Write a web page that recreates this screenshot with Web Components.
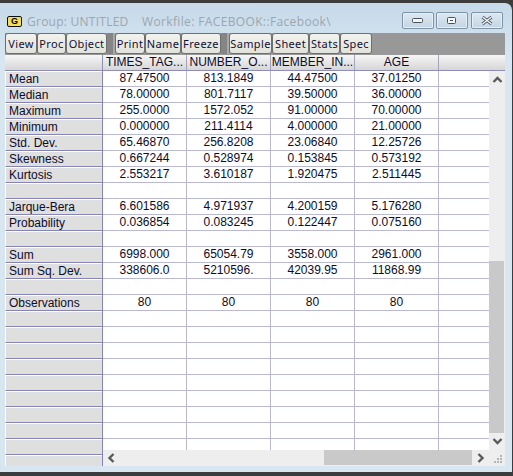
<!DOCTYPE html>
<html>
<head>
<meta charset="utf-8">
<style>
  html, body { margin: 0; height: 100%; background: #3c3c3c; overflow: hidden; }
  body { font-family: "Liberation Sans", Arial, sans-serif; font-size: 12px; }
</style>
</head>
<body>
<app-window title-left="Group: UNTITLED" title-right="Workfile: FACEBOOK::Facebook\">
  <tool-bar>
    <tool-btn w="32">View</tool-btn>
    <tool-btn w="29">Proc</tool-btn>
    <tool-btn w="41">Object</tool-btn>
    <tool-gap></tool-gap>
    <tool-btn w="30">Print</tool-btn>
    <tool-btn w="36">Name</tool-btn>
    <tool-btn w="40">Freeze</tool-btn>
    <tool-gap></tool-gap>
    <tool-btn w="43">Sample</tool-btn>
    <tool-btn w="37">Sheet</tool-btn>
    <tool-btn w="31">Stats</tool-btn>
    <tool-btn w="32">Spec</tool-btn>
  </tool-bar>
  <stat-grid></stat-grid>
</app-window>

<script>
class AppWindow extends HTMLElement {
  constructor() {
    super();
    this.attachShadow({ mode: 'open' });
  }
  connectedCallback() {
    this.shadowRoot.innerHTML = `
      <style>
        :host {
          display: flex; flex-direction: column; box-sizing: border-box;
          width: 512px; height: 469px; margin-top: 3px;
          padding: 0 7px 6px 5px;
          background: linear-gradient(#c6d9e8, #d8e6f2 60px);
          border-top-right-radius: 7px;
        }
        .title { display: flex; align-items: center; height: 30px; flex: none; }
        .icon {
          box-sizing: border-box; width: 15px; height: 11px; margin: 7px 0 0 2px;
          background: #f3de5a; border: 1px solid #111; border-radius: 2px;
          font: bold 9px/9px "Liberation Sans", sans-serif; text-align: center; color: #000;
        }
        .txt {
          font: 12px "Open Sans", sans-serif; color: #9ba6af; margin-top: 6px; white-space: nowrap;
          letter-spacing: 0.25px;
        }
        .l { margin-left: 5px; width: 115px; }
        .r { letter-spacing: 0.36px; }
        .btns { margin-left: auto; display: flex; gap: 2px; margin-top: 5px; margin-right: 2px; }
        .b {
          box-sizing: border-box; width: 32px; height: 17px;
          border: 1px solid #7d93a8; border-radius: 2px;
          background: linear-gradient(#dde8f2, #c4d4e2);
          display: flex; align-items: center; justify-content: center;
          box-shadow: inset 0 0 0 1px #e6eff7;
        }
        svg { display: block; }
      </style>
      <div class="title">
        <span class="icon">G</span>
        <span class="txt l">${this.getAttribute('title-left')}</span>
        <span class="txt r">${this.getAttribute('title-right')}</span>
        <span class="btns">
          <span class="b"><svg width="12" height="6"><rect x=".5" y=".5" width="10" height="4" rx="1" fill="#f4f6f8" stroke="#45525e"/></svg></span>
          <span class="b"><svg width="12" height="8"><rect x="1.5" y=".5" width="8" height="6" rx="1" fill="#f4f6f8" stroke="#45525e"/><rect x="4" y="3" width="3" height="1" fill="#45525e"/></svg></span>
          <span class="b" style="margin-left:1px"><svg width="12" height="9"><path d="M1.5 1 L10.5 8 M10.5 1 L1.5 8" stroke="#45525e" stroke-width="3"/><path d="M1.5 1 L10.5 8 M10.5 1 L1.5 8" stroke="#f4f6f8" stroke-width="1.4"/></svg></span>
        </span>
      </div>
      <slot></slot>`;
  }
}

class ToolBar extends HTMLElement {
  constructor() {
    super();
    this.attachShadow({ mode: 'open' }).innerHTML = `
      <style>
        :host { display: flex; flex: none; height: 22px; background: #989898; }
      </style>
      <slot></slot>`;
  }
}

class ToolBtn extends HTMLElement {
  constructor() {
    super();
    this.attachShadow({ mode: 'open' });
  }
  connectedCallback() {
    this.shadowRoot.innerHTML = `
      <style>
        :host {
          display: flex; flex: none; align-items: center; justify-content: center; box-sizing: border-box;
          width: ${this.getAttribute('w')}px; height: 21px;
          background: linear-gradient(#f2f2ee, #e2e2dc);
          border: 1px solid #6f6f6f; border-radius: 3px;
          font: 11px "Noto Sans", sans-serif; letter-spacing: 0.35px; color: #101030; white-space: nowrap;
        }
      </style>
      <slot></slot>`;
  }
}

class ToolGap extends HTMLElement {
  constructor() {
    super();
    this.attachShadow({ mode: 'open' }).innerHTML = `
      <style>
        :host { display: block; flex: none; box-sizing: border-box; width: 8px; height: 21px; background: #858585; border-right: 2px solid #a8a8a8; }
      </style>`;
  }
}

class ScrollBar extends HTMLElement {
  constructor() {
    super();
    this.attachShadow({ mode: 'open' });
  }
  connectedCallback() {
    const v = this.getAttribute('dir') === 'v';
    const size = v ? 'width="16" height="17"' : 'width="17" height="16"';
    const chev = d => `<svg ${size}><path d="${d}" fill="none" stroke="#5a5a5a" stroke-width="2.4"/></svg>`;
    const first = v ? chev('M4.5 11 L8.5 7 L12.5 11') : chev('M10.5 4 L6.5 8 L10.5 12');
    const last = v ? chev('M4.5 6 L8.5 10 L12.5 6') : chev('M6.5 4 L10.5 8 L6.5 12');
    this.shadowRoot.innerHTML = `
      <style>
        :host {
          display: flex; flex-direction: ${v ? 'column' : 'row'};
          background: #eeeeee; min-width: 0; min-height: 0;
        }
        svg { display: block; flex: none; }
        .track { flex: 1; display: flex; flex-direction: ${v ? 'column' : 'row'}; justify-content: flex-end; }
        .thumb { flex: none; background: #c9c9c9; ${v ? 'height: 172px; width: 15px;' : 'width: 148px; height: 15px;'} }
      </style>
      ${first}<div class="track"><div class="thumb"></div></div>${last}`;
  }
}

const rowData = [
  ['Mean', '87.47500', '813.1849', '44.47500', '37.01250'],
  ['Median', '78.00000', '801.7117', '39.50000', '36.00000'],
  ['Maximum', '255.0000', '1572.052', '91.00000', '70.00000'],
  ['Minimum', '0.000000', '211.4114', '4.000000', '21.00000'],
  ['Std. Dev.', '65.46870', '256.8208', '23.06840', '12.25726'],
  ['Skewness', '0.667244', '0.528974', '0.153845', '0.573192'],
  ['Kurtosis', '2.553217', '3.610187', '1.920475', '2.511445'],
  [''],
  ['Jarque-Bera', '6.601586', '4.971937', '4.200159', '5.176280'],
  ['Probability', '0.036854', '0.083245', '0.122447', '0.075160'],
  [''],
  ['Sum', '6998.000', '65054.79', '3558.000', '2961.000'],
  ['Sum Sq. Dev.', '338606.0', '5210596.', '42039.95', '11868.99'],
  [''],
  ['Observations', '80', '80', '80', '80']
];
while (rowData.length < 25) rowData.push(['']);

class StatGrid extends HTMLElement {
  constructor() {
    super();
    this.attachShadow({ mode: 'open' });
  }
  connectedCallback() {
    const heads = ['', 'TIMES_TAG...', 'NUMBER_O...', 'MEMBER_IN...', 'AGE', ''];
    const labels = rowData.map(r => `<div class="rh">${r[0]}</div>`).join('');
    const cells = rowData.map(r => `<div class="row">${[1, 2, 3, 4, 5].map(i => `<div class="c">${r[i] || ''}</div>`).join('')}</div>`).join('');
    this.shadowRoot.innerHTML = `
      <style>
        :host {
          display: grid; flex: 1; min-height: 0;
          grid-template-columns: 98px 386px 16px;
          grid-template-rows: 16px 379px 16px;
          font: 12px "Liberation Sans", Arial, sans-serif; color: #0c0c28;
        }
        .head {
          grid-column: 1 / 4; display: flex; overflow: hidden;
          background: linear-gradient(#f6f6f6, #d6d6d6);
          border-bottom: 1px solid #8e8eb8; box-sizing: border-box;
        }
        .head div { box-sizing: border-box; width: 84px; flex: none; border-right: 1px solid #a3a3c0; text-align: center; line-height: 15px; white-space: nowrap; overflow: hidden; }
        .head div:first-child { width: 98px; border-right-color: #8e8eb8; }
        .head div:last-child { border: 0; flex: 1; }
        .labels { grid-column: 1; grid-row: 2 / 4; overflow: hidden; border-right: 1px solid #8585b5; }
        .rh {
          box-sizing: border-box; height: 16px; padding-left: 3px; line-height: 14px;
          background: #dfdfdf; border-bottom: 1px solid #8585b5;
          border-top: 1px solid #fff; border-left: 1px solid #fff;
        }
        .cells { grid-column: 2; grid-row: 2; overflow: hidden; background: #fff; }
        .row { display: flex; height: 16px; box-sizing: border-box; border-bottom: 1px solid #b9b9d2; }
        .c { box-sizing: border-box; width: 84px; flex: none; border-right: 1px solid #b9b9d2; text-align: center; line-height: 15px; }
        .c:last-child { width: 50px; border: 0; }
        scroll-bar[dir="v"] { grid-column: 3; grid-row: 2; }
        scroll-bar[dir="h"] { grid-column: 2; grid-row: 3; }
        .corner { grid-column: 3; grid-row: 3; background: #eeeeee; display: flex; align-items: flex-end; justify-content: flex-end; padding: 0 2px 2px 0; }
        svg { display: block; }
      </style>
      <div class="head">${heads.map(h => `<div>${h}</div>`).join('')}</div>
      <div class="labels">${labels}</div>
      <div class="cells">${cells}</div>
      <scroll-bar dir="v"></scroll-bar>
      <scroll-bar dir="h"></scroll-bar>
      <div class="corner"><svg width="9" height="9" fill="#b4b4b4"><rect x="6" y="0" width="2" height="2"/><rect x="3" y="3" width="2" height="2"/><rect x="6" y="3" width="2" height="2"/><rect x="0" y="6" width="2" height="2"/><rect x="3" y="6" width="2" height="2"/><rect x="6" y="6" width="2" height="2"/></svg></div>`;
  }
}

customElements.define('app-window', AppWindow);
customElements.define('tool-bar', ToolBar);
customElements.define('tool-btn', ToolBtn);
customElements.define('tool-gap', ToolGap);
customElements.define('scroll-bar', ScrollBar);
customElements.define('stat-grid', StatGrid);
</script>
</body>
</html>
